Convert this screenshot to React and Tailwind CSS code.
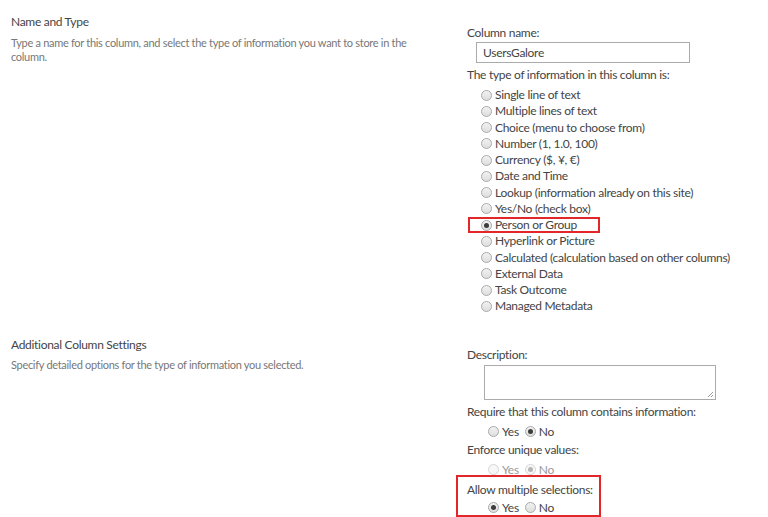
const TYPES = [
  'Single line of text',
  'Multiple lines of text',
  'Choice (menu to choose from)',
  'Number (1, 1.0, 100)',
  'Currency ($, ¥, €)',
  'Date and Time',
  'Lookup (information already on this site)',
  'Yes/No (check box)',
  'Person or Group',
  'Hyperlink or Picture',
  'Calculated (calculation based on other columns)',
  'External Data',
  'Task Outcome',
  'Managed Metadata',
]

function Radio({ checked, disabled }) {
  return (
    <span
      className={`relative inline-flex h-[11px] w-[11px] shrink-0 items-center justify-center rounded-full border ${
        disabled ? 'border-[#d6d6d6] bg-[#f7f7f7]' : 'border-[#a9a9a9] bg-gradient-to-b from-[#f2f2f2] to-[#dedede]'
      }`}
    >
      {checked && (
        <span className={`h-[5px] w-[5px] rounded-full ${disabled ? 'bg-[#b5b5b5]' : 'bg-[#3c3c3c]'}`} />
      )}
    </span>
  )
}

function YesNo({ value, disabled }) {
  const text = disabled ? 'text-[#9a9a9a]' : 'text-[#444]'
  return (
    <div className={`flex h-4 items-center pl-[21px] ${text}`}>
      <Radio checked={value === 'yes'} disabled={disabled} />
      <span className="ml-[3px]">Yes</span>
      <span className="ml-[6px] flex items-center">
        <Radio checked={value === 'no'} disabled={disabled} />
      </span>
      <span className="ml-[3px]">No</span>
    </div>
  )
}

export default function App() {
  return (
    <div
      className="h-[517px] w-[768px] overflow-hidden bg-white text-[12px] leading-4 tracking-[-0.3px] text-[#444]"
      style={{ fontFamily: 'Lato, "Open Sans", sans-serif' }}
    >
      {/* Name and Type */}
      <div className="flex">
        <div className="w-[467px] pl-[11px] pt-[14px]">
          <h2 className="text-[12px] leading-4 text-[#444]">Name and Type</h2>
          <p className="mt-[6px] w-[400px] text-[11px] leading-[14px] text-[#777]">
            Type a name for this column, and select the type of information you want to store in the column.
          </p>
        </div>
        <div className="flex-1 pt-[25px]">
          <div>Column name:</div>
          <div className="ml-[9px] mt-[1px] flex h-[21px] w-[214px] items-center border border-[#ababab] px-[6px]">
            UsersGalore
          </div>
          <div className="mt-[4px]">The type of information in this column is:</div>
          <div className="mt-[4px]">
            {TYPES.map((t) => (
              <div key={t} className="relative flex h-[16.25px] items-center pl-[14px]">
                <Radio checked={t === 'Person or Group'} />
                <span className="ml-[3px]">{t}</span>
                {t === 'Person or Group' && (
                  <span className="pointer-events-none absolute left-[1px] top-0 h-[16px] w-[132px] border-2 border-[#e3262a]" />
                )}
              </div>
            ))}
          </div>
        </div>
      </div>

      {/* Additional Column Settings */}
      <div className="mt-[22px] flex">
        <div className="w-[467px] pl-[11px]">
          <h2 className="text-[12px] leading-4 text-[#444]">Additional Column Settings</h2>
          <p className="mt-[5px] text-[11px] leading-[14px] text-[#777]">
            Specify detailed options for the type of information you selected.
          </p>
        </div>
        <div className="flex-1 pt-[10px]">
          <div>Description:</div>
          <div className="relative ml-[17px] mt-[2px] h-[35px] w-[232px] border border-[#ababab]">
            <svg className="absolute bottom-[1px] right-[1px]" width="7" height="7" viewBox="0 0 7 7">
              <path d="M6 1L1 6M6 4L4 6" stroke="#999" strokeWidth="1" />
            </svg>
          </div>
          <div className="mt-[4px]">Require that this column contains information:</div>
          <div className="mt-[4px]">
            <YesNo value="no" />
          </div>
          <div className="mt-[2px]">Enforce unique values:</div>
          <div className="mt-[4px]">
            <YesNo value="no" disabled />
          </div>
          <div className="relative mt-[4px]">
            <span className="pointer-events-none absolute left-[-11px] top-[-7px] h-[42px] w-[145px] border-2 border-[#e3262a]" />
            <div>Allow multiple selections:</div>
            <div className="mt-[2px]">
              <YesNo value="yes" />
            </div>
          </div>
        </div>
      </div>
    </div>
  )
}
